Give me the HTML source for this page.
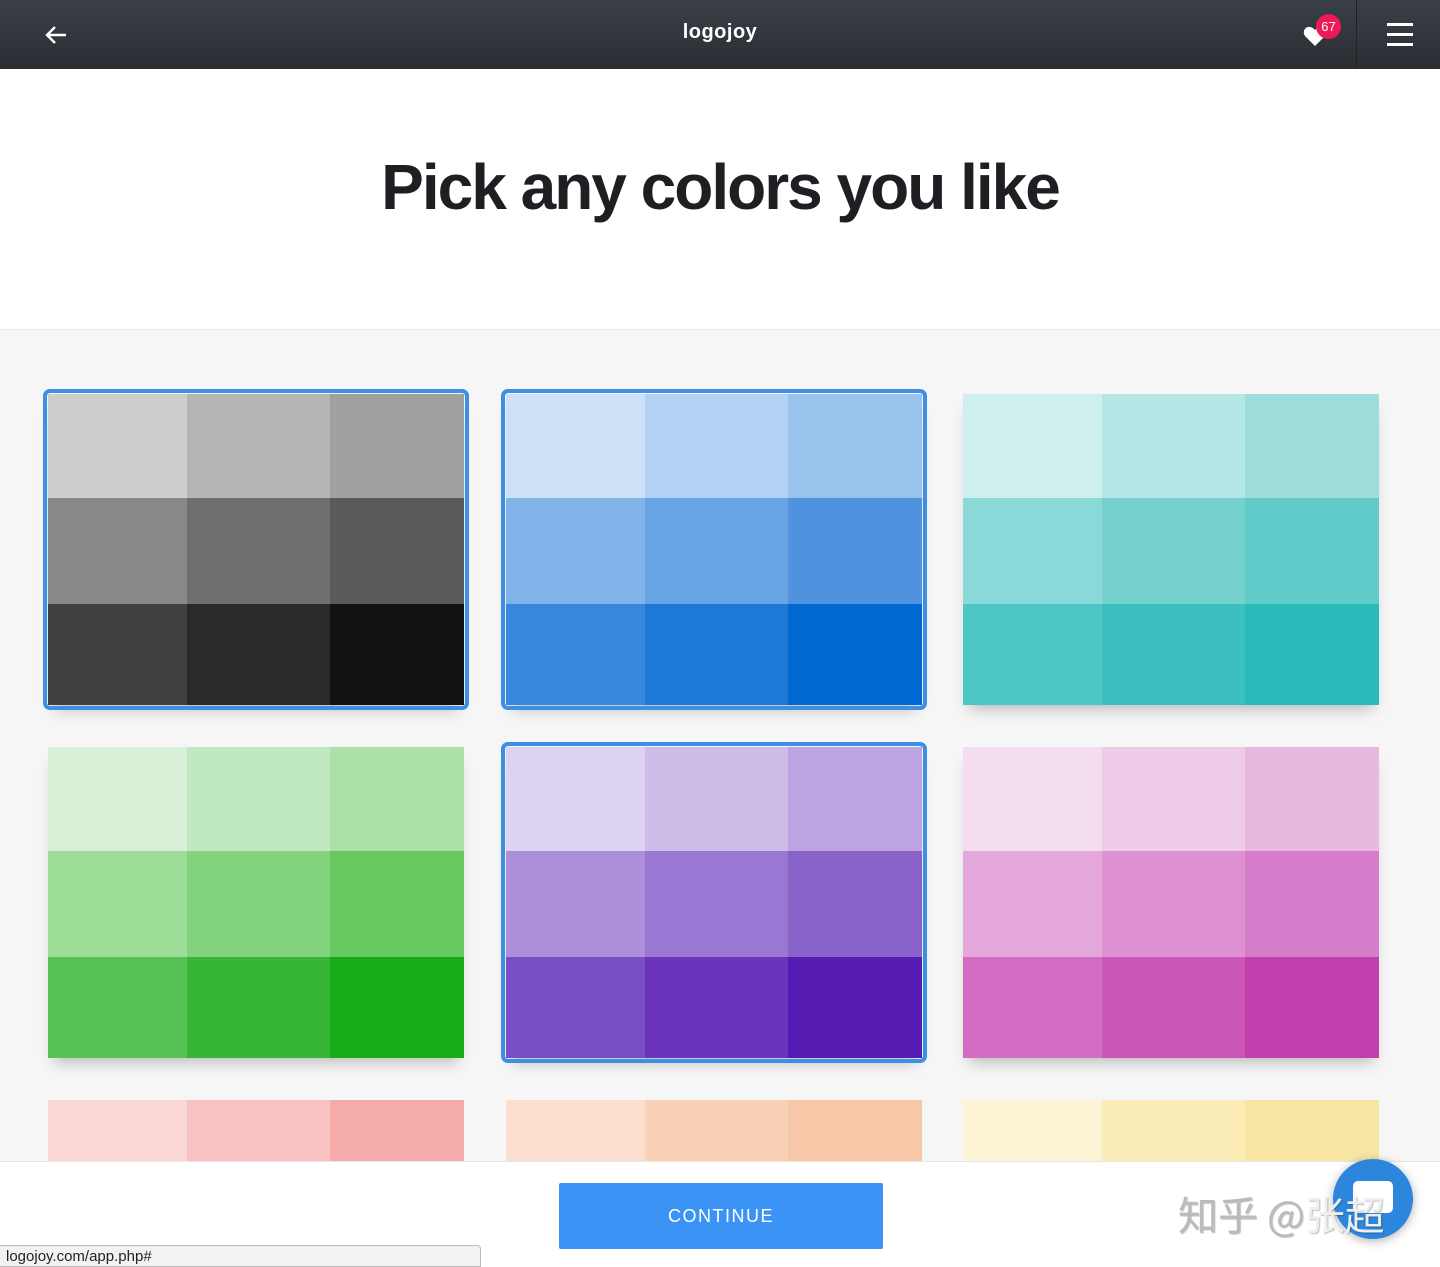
<!DOCTYPE html><html><head><style>
*{margin:0;padding:0;box-sizing:border-box}
html,body{width:1440px;height:1267px;overflow:hidden}
body{background:#f6f6f6;font-family:"Liberation Sans",sans-serif;position:relative}
.hdr{position:absolute;left:0;top:0;width:1440px;height:69px;background:linear-gradient(#3a3f47,#2b2e33);box-shadow:0 1px 3px rgba(0,0,0,.4)}
.top{position:absolute;top:69px;left:0;width:1440px;height:261px;background:#fff;border-bottom:1px solid #e6e6e6}
h1{position:absolute;top:150px;width:1440px;text-align:center;font-size:64px;font-weight:700;color:#1d1f23;letter-spacing:-2px}
.card{position:absolute;width:416px;height:311px;display:grid;grid-template-columns:139px 143px 134px;grid-template-rows:104px 106px 101px;box-shadow:0 10px 14px -6px rgba(0,0,0,.25)}
.short{height:61px;overflow:hidden;box-shadow:none}
.sel{outline:4px solid #3d8fe6;outline-offset:1px;border-radius:2px}
.foot{position:absolute;left:0;top:1161px;width:1440px;height:106px;background:#fff;border-top:1px solid #e6e6e6}
</style></head><body>
<div class="hdr">
<svg style="position:absolute;left:44px;top:24px" width="24" height="22" viewBox="0 0 24 22"><path d="M22 11H3M11 3L3 11l8 8" stroke="#fff" stroke-width="2.4" fill="none"/></svg>
<div style="position:absolute;left:0;width:1440px;top:21px;text-align:center;color:#fff;font-size:20px;font-weight:700;letter-spacing:.5px">logojoy</div>
<svg style="position:absolute;left:1303px;top:25px" width="24" height="22" viewBox="0 0 24 22"><path d="M12 21L2 11C-1 7 2 1 7 2c2 0 4 2 5 3 1-1 3-3 5-3 5-1 8 5 5 9z" fill="#fff"/></svg>
<div style="position:absolute;left:1316px;top:14px;width:25px;height:25px;border-radius:50%;background:#ed1a5a;color:#fff;font-size:13px;text-align:center;line-height:25px">67</div>
<div style="position:absolute;left:1356px;top:0;width:1px;height:69px;background:#222"></div>
<div style="position:absolute;left:1387px;top:23px;width:26px;height:3px;background:#fff;box-shadow:0 10px 0 #fff,0 20px 0 #fff"></div>
</div>
<div class="top"></div>
<h1>Pick any colors you like</h1>

<div class="card sel" style="left:48px;top:394px"><i style="background:#cdcdcd"></i><i style="background:#b5b5b5"></i><i style="background:#a0a0a0"></i><i style="background:#888"></i><i style="background:#6f6f6f"></i><i style="background:#5a5a5a"></i><i style="background:#404040"></i><i style="background:#2a2a2a"></i><i style="background:#121212"></i></div>
<div class="card sel" style="left:506px;top:394px"><i style="background:#cce1f5"></i><i style="background:#b2d1f3"></i><i style="background:#99c3ec"></i><i style="background:#80b3e8"></i><i style="background:#68a3e3"></i><i style="background:#4f93de"></i><i style="background:#3588db"></i><i style="background:#1e78d6"></i><i style="background:#0068d0"></i></div>
<div class="card" style="left:963px;top:394px"><i style="background:#cfeeee"></i><i style="background:#b3e6e5"></i><i style="background:#9ddedc"></i><i style="background:#89d9d9"></i><i style="background:#75d2cf"></i><i style="background:#60cbc8"></i><i style="background:#4fc6c6"></i><i style="background:#3bc0bf"></i><i style="background:#2bbaba"></i></div>
<div class="card" style="left:48px;top:747px"><i style="background:#d8f0d8"></i><i style="background:#c1e9c1"></i><i style="background:#abe1a6"></i><i style="background:#9ddd98"></i><i style="background:#83d37e"></i><i style="background:#67c860"></i><i style="background:#56c253"></i><i style="background:#37b636"></i><i style="background:#17ac16"></i></div>
<div class="card sel" style="left:506px;top:747px"><i style="background:#ddd2f0"></i><i style="background:#cdbbe8"></i><i style="background:#bba4e0"></i><i style="background:#ab8fd9"></i><i style="background:#9b77d4"></i><i style="background:#8962ca"></i><i style="background:#7a4ec4"></i><i style="background:#6a35bb"></i><i style="background:#561bb3"></i></div>
<div class="card" style="left:963px;top:747px"><i style="background:#f4ddef"></i><i style="background:#eecbe8"></i><i style="background:#e8b8de"></i><i style="background:#e4a7db"></i><i style="background:#dd91d2"></i><i style="background:#d57ccb"></i><i style="background:#d26dc3"></i><i style="background:#cb57b9"></i><i style="background:#c23fae"></i></div>
<div class="card short" style="left:48px;top:1100px"><i style="background:#fad6d6"></i><i style="background:#f8c2c2"></i><i style="background:#f6abab"></i></div>
<div class="card short" style="left:506px;top:1100px"><i style="background:#fadfcf"></i><i style="background:#f9d2b6"></i><i style="background:#f7c8a8"></i></div>
<div class="card short" style="left:963px;top:1100px"><i style="background:#fdf4d6"></i><i style="background:#fcedb8"></i><i style="background:#f8e7a4"></i></div>

<div class="foot">
<div style="position:absolute;left:559px;top:21px;width:324px;height:66px;background:#3b94f5;border-radius:2px;color:#fff;font-size:18px;letter-spacing:1.5px;text-align:center;line-height:66px">CONTINUE</div>
<div style="position:absolute;left:1333px;top:-3px;width:80px;height:80px;border-radius:50%;background:#2b86dc;box-shadow:0 2px 10px rgba(0,0,0,.3)"></div>
<div style="position:absolute;left:1353px;top:19px;width:40px;height:32px;border-radius:5px;background:#fff"></div>
<div style="position:absolute;left:1178px;top:22px;font-family:'Noto Sans CJK SC',sans-serif;font-size:40px;color:#bbb;white-space:nowrap;text-shadow:1px 1px 1px rgba(0,0,0,.25)">知乎 @<span style="color:#eee">张超</span></div>
</div>
<div style="position:absolute;left:0;top:1245px;width:481px;height:22px;background:#f2f2f2;border:1px solid #bbb;border-left:0;border-radius:0 4px 0 0;font-size:15px;color:#222;padding:2px 6px">logojoy.com/app.php#</div>
</body></html>
